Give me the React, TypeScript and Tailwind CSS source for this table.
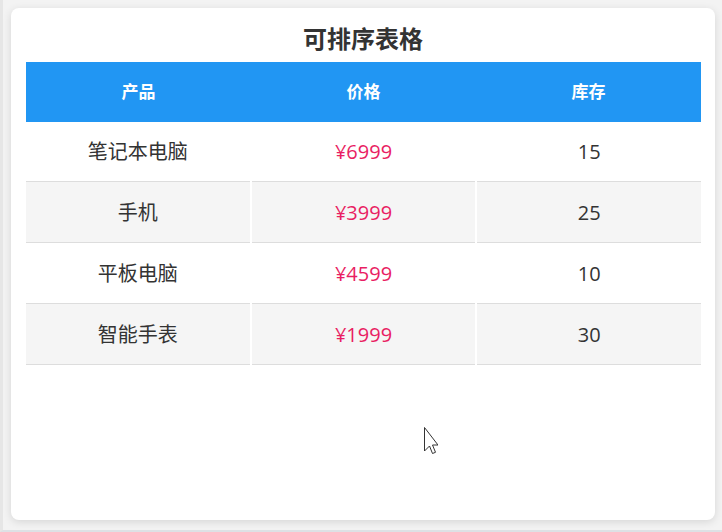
import React from 'react';

const rows = [
  { name: '笔记本电脑', price: 6999, stock: 15 },
  { name: '手机', price: 3999, stock: 25 },
  { name: '平板电脑', price: 4599, stock: 10 },
  { name: '智能手表', price: 1999, stock: 30 },
];

export default function App() {
  return (
    <div
      className="relative h-[532px] w-[722px] overflow-hidden border-l-[3px] border-b-2 border-l-[#e6e6e6] border-b-[#dde1e5] bg-[#f3f3f3] pl-[8px] pt-[8px]"
      style={{ fontFamily: '"Open Sans", "Noto Sans CJK SC", sans-serif' }}
    >
      <div className="h-[512px] w-[704px] rounded-[8px] bg-white px-[15px] pt-[13px] shadow-[0_2px_8px_rgba(0,0,0,0.12)]">
        <h1 className="text-center text-[24px] font-bold leading-[36px] text-[#333]">可排序表格</h1>
        <div className="mt-[5px] w-[675px]">
          <div className="grid h-[60px] grid-cols-3 items-center bg-[#2196f3] text-center text-[17px] font-bold text-white">
            <div>产品</div>
            <div>价格</div>
            <div>库存</div>
          </div>
          {rows.map((r, i) => (
            <div
              key={r.name}
              className={`grid grid-cols-3 gap-x-[2px] text-center text-[20px] text-[#333] ${i === 0 ? 'h-[60px]' : 'h-[61px]'}`}
            >
              {[r.name, `¥${r.price}`, String(r.stock)].map((v, j) => (
                <div
                  key={j}
                  className={`flex items-center justify-center border-b-[1.5px] border-[#dddddd] pt-[1px] ${i % 2 === 1 ? 'bg-[#f5f5f5]' : 'bg-white'} ${j === 1 ? 'text-[#e91e63]' : ''}`}
                >
                  {v}
                </div>
              ))}
            </div>
          ))}
        </div>
      </div>
      <svg className="absolute left-[421px] top-[427px]" width="14" height="28" viewBox="0 0 14 28">
        <path
          d="M0.5 0.5 L0.5 24 L5.5 19 L8.5 26.5 L11.5 25.3 L8.5 18 L14 18 Z"
          fill="white"
          stroke="#333"
          strokeWidth="1"
          strokeLinejoin="round"
        />
      </svg>
    </div>
  );
}
